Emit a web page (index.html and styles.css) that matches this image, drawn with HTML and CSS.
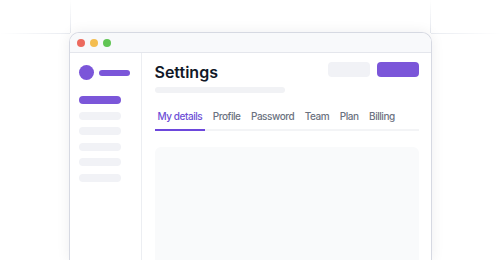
FILE: index.html
```html
<!DOCTYPE html>
<html lang="en">
<head>
  <meta charset="UTF-8" />
  <meta name="viewport" content="width=device-width, initial-scale=1.0"/>
  <title>Settings</title>
  <link rel="stylesheet" href="styles.css">
</head>
<body>
  <div class="stage">
    <!-- faint guide lines behind the window -->
    <span class="guide guide-v guide-left"></span>
    <span class="guide guide-v guide-right"></span>
    <span class="guide guide-h guide-h-left"></span>
    <span class="guide guide-h guide-h-right"></span>

    <div class="window">
      <div class="titlebar">
        <span class="dot dot-red"></span>
        <span class="dot dot-yellow"></span>
        <span class="dot dot-green"></span>
      </div>

      <div class="app">
        <aside class="sidebar">
          <div class="logo">
            <span class="logo-mark"></span>
            <span class="logo-text"></span>
          </div>
          <nav class="nav">
            <span class="nav-item active"></span>
            <span class="nav-item"></span>
            <span class="nav-item"></span>
            <span class="nav-item"></span>
            <span class="nav-item"></span>
            <span class="nav-item"></span>
          </nav>
        </aside>

        <main class="main">
          <div class="header">
            <div>
              <h1>Settings</h1>
              <div class="subtitle"></div>
            </div>
            <div class="actions">
              <span class="btn btn-ghost"></span>
              <span class="btn btn-primary"></span>
            </div>
          </div>

          <div class="tabs">
            <span class="tab active">My details</span>
            <span class="tab">Profile</span>
            <span class="tab">Password</span>
            <span class="tab">Team</span>
            <span class="tab">Plan</span>
            <span class="tab">Billing</span>
          </div>

          <div class="card"></div>
        </main>
      </div>
    </div>
  </div>
</body>
</html>
```

FILE: styles.css
```css
body {
  font-family: 'Inter', 'Noto Sans', sans-serif;
  background-color: #fff;
  color: #111827;
  margin: 0;
  width: 500px;
  height: 260px;
  overflow: hidden;
}

.stage {
  position: relative;
  display: flex;
  justify-content: center;
  padding-top: 32px;
  height: 228px;
}

.guide {
  position: absolute;
  display: block;
}

.guide-v {
  top: 0;
  width: 1px;
  height: 33px;
  background: linear-gradient(to bottom, rgba(226,229,236,0), rgba(226,229,236,0.9));
}

.guide-left { left: 70px; }
.guide-right { left: 430px; }

.guide-h {
  top: 33px;
  height: 1px;
  width: 70px;
}

.guide-h-left {
  left: 0;
  background: linear-gradient(to right, rgba(230,233,239,0), rgba(230,233,239,0.9));
}

.guide-h-right {
  left: 431px;
  background: linear-gradient(to left, rgba(230,233,239,0), rgba(230,233,239,0.9));
}

.window {
  position: relative;
  width: 361px;
  height: 228px;
  background: #fff;
  border: 1px solid #d6d9e2;
  border-bottom: none;
  border-radius: 10px 10px 0 0;
  box-shadow: 0 0 14px rgba(17,24,39,0.07);
  overflow: hidden;
}

.titlebar {
  display: flex;
  align-items: center;
  gap: 5px;
  height: 19px;
  padding-left: 7px;
  background: #f8f9fb;
  border-bottom: 1px solid #e4e6ec;
}

.dot {
  width: 8px;
  height: 8px;
  border-radius: 50%;
}

.dot-red { background-color: #ec6a5e; }
.dot-yellow { background-color: #f4bd4f; }
.dot-green { background-color: #61c554; }

.app {
  display: flex;
  height: 208px;
}

.sidebar {
  flex-shrink: 0;
  width: 53px;
  padding: 12px 9px 0;
  border-right: 1px solid #eceef2;
}

.logo {
  display: flex;
  align-items: center;
  gap: 5px;
}

.logo-mark {
  width: 15px;
  height: 15px;
  border-radius: 50%;
  background-color: #7b56d9;
}

.logo-text {
  width: 31px;
  height: 6px;
  border-radius: 3px;
  background-color: #7b56d9;
}

.nav {
  display: flex;
  flex-direction: column;
  gap: 7.6px;
  margin-top: 16px;
}

.nav-item {
  display: block;
  width: 42px;
  height: 8px;
  border-radius: 4px;
  background-color: #f1f2f6;
}

.nav-item.active {
  background-color: #7b56d9;
}

.main {
  flex: 1;
  min-width: 0;
  padding: 9px 12px 0 13px;
}

.header {
  display: flex;
  justify-content: space-between;
  align-items: flex-start;
}

h1 {
  margin: 0;
  font-size: 16px;
  line-height: 20px;
  font-weight: 600;
  color: #111827;
}

.subtitle {
  width: 130px;
  height: 6px;
  margin-top: 5px;
  border-radius: 3px;
  background-color: #f1f2f5;
}

.actions {
  display: flex;
  gap: 7px;
}

.btn {
  display: block;
  width: 42px;
  height: 15px;
  border-radius: 4px;
}

.btn-ghost {
  background-color: #f1f2f6;
}

.btn-primary {
  background-color: #7b56d9;
}

.tabs {
  display: flex;
  gap: 5px;
  margin-top: 16px;
  border-bottom: 2px solid #f3f4f6;
  white-space: nowrap;
}

.tab {
  padding: 0 2.5px 6px 3px;
  font-size: 10px;
  line-height: 14px;
  letter-spacing: -0.45px;
  font-weight: 500;
  color: #6b7280;
}

.tab.active {
  color: #6d4fd6;
  border-bottom: 2px solid #6d47dc;
  margin-bottom: -2px;
}

.card {
  height: 140px;
  margin-top: 16px;
  border-radius: 6px;
  background-color: #f9fafb;
}
```
